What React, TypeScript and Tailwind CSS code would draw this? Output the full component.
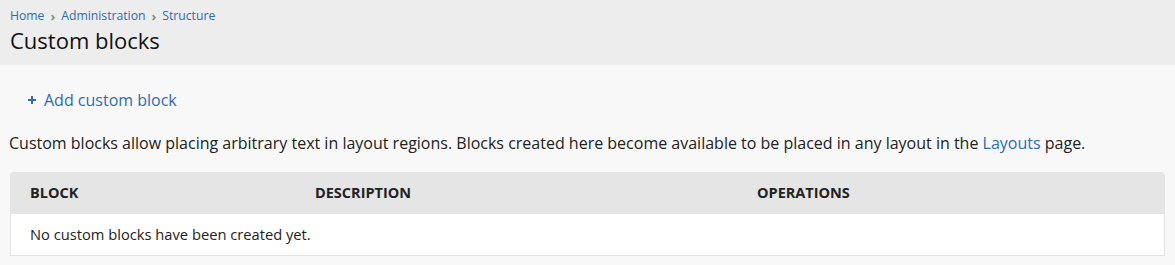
export default function App() {
  return (
    <div className="min-h-screen bg-[#f8f8f8] text-[#222] font-['Open_Sans',sans-serif]">
      {/* header */}
      <header className="h-[65px] bg-[#ededed] px-[10px] pt-[9px]">
        <nav className="flex items-center gap-[6px] text-[12.2px] leading-[14px] text-[#2b6cb8]">
          <a href="#">Home</a>
          <span className="text-[#888] text-[13px] font-bold">›</span>
          <a href="#">Administration</a>
          <span className="text-[#888] text-[13px] font-bold">›</span>
          <a href="#">Structure</a>
        </nav>
        <h1 className="mt-[3px] text-[22px] leading-[28px] font-normal text-[#111]">Custom blocks</h1>
      </header>

      <main className="px-[10px] pt-[25px]">
        <a href="#" className="ml-[18px] flex items-center gap-[8px] text-[16px] leading-[20px] text-[#2b6cb8]">
          <svg width="8" height="8" viewBox="0 0 8 8" className="fill-current">
            <rect x="3" y="0" width="2" height="8" />
            <rect x="0" y="3" width="8" height="2" />
          </svg>
          Add custom block
        </a>

        <p className="mt-[23px] text-[16px] leading-[20px] -ml-[1px]">
          Custom blocks allow placing arbitrary text in layout regions. Blocks created here become available to be placed in any layout in the{" "}
          <a href="#" className="text-[#2b6cb8]">Layouts</a> page.
        </p>

        <table className="mt-[19px] w-full border-separate border-spacing-0 text-[14.5px]">
          <colgroup>
            <col className="w-[285px]" />
            <col className="w-[442px]" />
            <col />
          </colgroup>
          <thead>
            <tr className="h-[42px] bg-[#e5e5e5] text-left uppercase font-bold">
              <th className="pl-[20px] rounded-tl-[4px]">Block</th>
              <th className="pl-[20px]">Description</th>
              <th className="pl-[20px] rounded-tr-[4px]">Operations</th>
            </tr>
          </thead>
          <tbody>
            <tr className="h-[42px] bg-white">
              <td colSpan={3} className="pl-[19px] text-[14.7px] border border-t-0 border-[#e2e2e2]">
                No custom blocks have been created yet.
              </td>
            </tr>
          </tbody>
        </table>
      </main>
    </div>
  );
}
